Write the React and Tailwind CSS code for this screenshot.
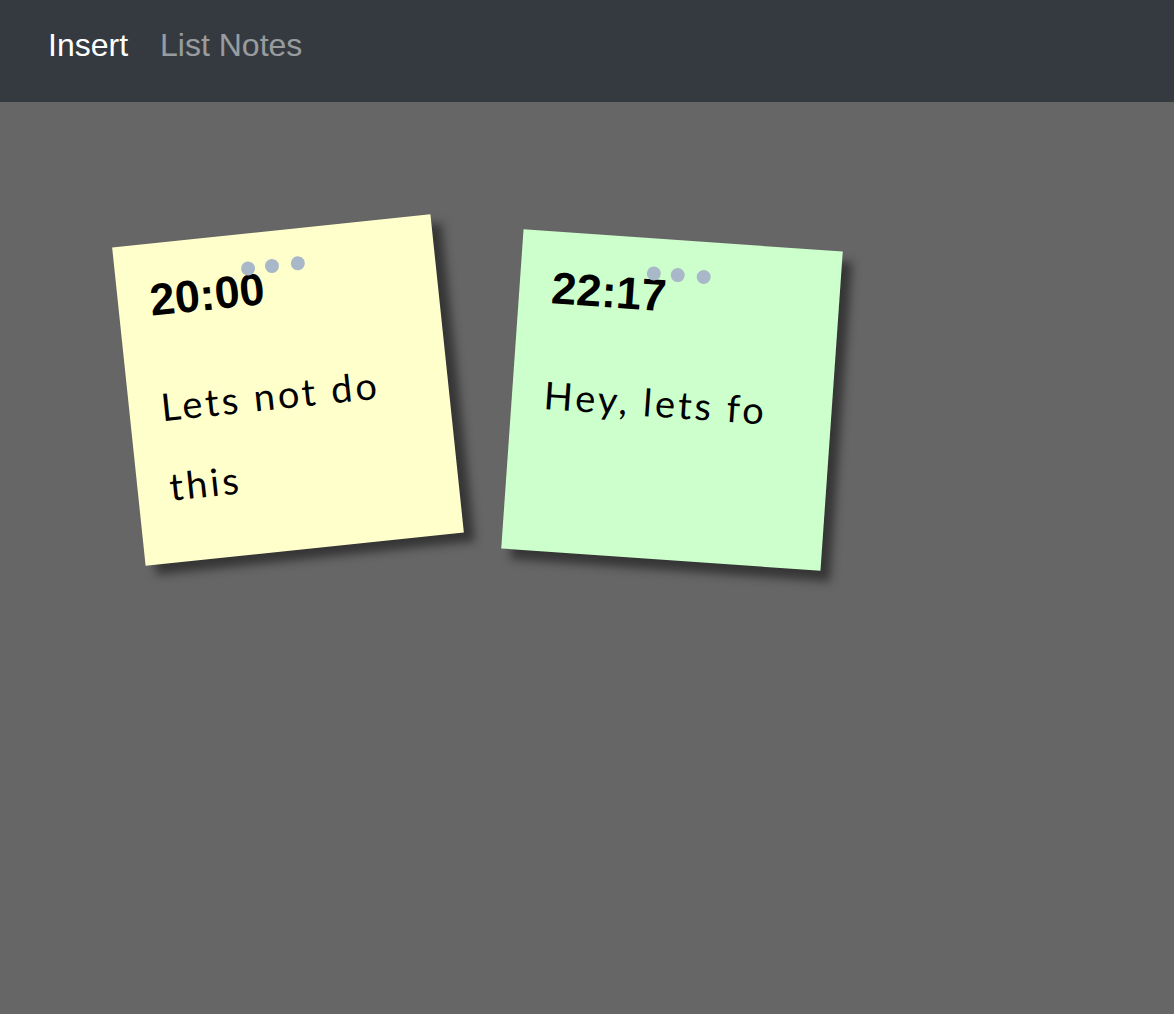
function Note({ time, lines, className }) {
  return (
    <li className={`relative w-80 h-80 list-none text-black pl-8 pt-8 shadow-[10px_10px_10px_rgba(33,33,33,0.7)] ${className}`}>
      <div className="absolute top-[28px] left-[126px] flex">
        <span className="w-3.5 h-3.5 rounded-full bg-[#a9b8c8]" />
        <span className="w-3.5 h-3.5 rounded-full bg-[#a9b8c8] ml-2.5" />
        <span className="w-3.5 h-3.5 rounded-full bg-[#a9b8c8] ml-3" />
      </div>
      <h2 className="font-['Liberation_Sans',Arial,sans-serif] font-bold text-[45px] leading-[52px] -mt-px">{time}</h2>
      <p className="font-['Lato',sans-serif] font-normal text-[38px] leading-[80px] tracking-[3px] mt-10 whitespace-pre-line">
        {lines}
      </p>
    </li>
  );
}

export default function App() {
  return (
    <div className="min-h-[1014px] bg-[#666666] font-['Liberation_Sans',Arial,sans-serif]">
      <nav className="h-[102px] bg-[#343a40] flex items-start gap-8 pl-12 pt-[26px] text-[32px] leading-[38px]">
        <a className="text-white">Insert</a>
        <a className="text-white/50">List Notes</a>
      </nav>
      <ul className="flex items-start gap-16 pl-32 pt-32">
        <Note time="20:00" lines={"Lets not do\nthis"} className="bg-[#ffffcc] -rotate-6" />
        <Note time="22:17" lines="Hey, lets fo" className="bg-[#ccffcc] rotate-[4deg] mt-2.5" />
      </ul>
    </div>
  );
}
